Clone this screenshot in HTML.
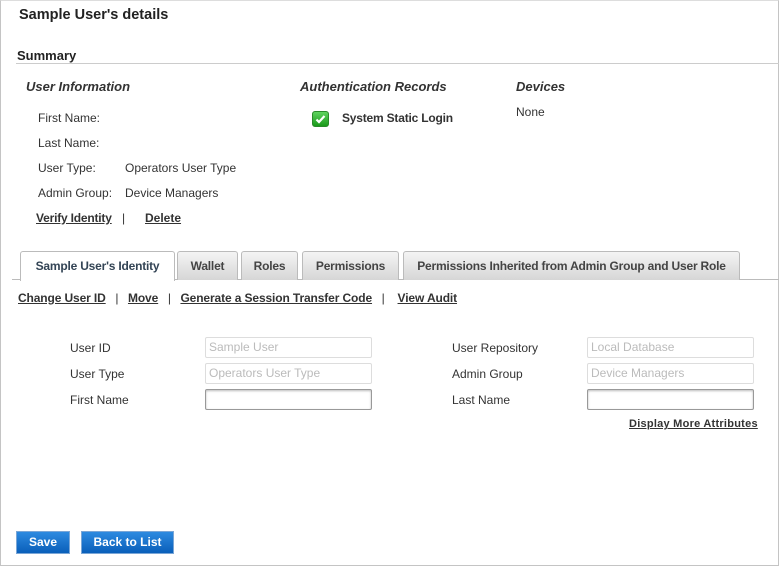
<!DOCTYPE html>
<html><head><style>
*{margin:0;padding:0;box-sizing:border-box}
body{width:779px;height:566px;position:relative;font-family:"Liberation Sans",Arial,sans-serif;font-size:12px;color:#333;background:#fff;overflow:hidden}
.frame{position:absolute;left:0;top:0;width:779px;height:566px;border:1px solid #c4c4c4;border-top-color:#ddd}
.a{position:absolute;white-space:nowrap}
.b{font-weight:bold}
.h{font-weight:bold;font-style:italic;font-size:13px;color:#333}
.lk{font-weight:bold;text-decoration:underline;color:#333}
.tab{position:absolute;top:251px;height:29px;border:1px solid #bbb;border-bottom:none;border-radius:3px 3px 0 0;background:linear-gradient(#f4f4f4,#d6d6d6);font-weight:bold;color:#444;text-align:center;line-height:28px;font-size:12px;letter-spacing:-0.2px}
.inp{position:absolute;width:167px;height:21px;border:1px solid #ddd;border-radius:2px;color:#bbb;padding-left:3px;line-height:19px}
.inp.e{border:1px solid #999;box-shadow:inset 0 1px 2px #bbb}
.btn{position:absolute;top:531px;height:23px;background:linear-gradient(#2d8ae0,#0a5fb9);border:1px solid #7aa6d6;color:#fff;font-weight:bold;text-align:center;line-height:21px;font-size:12px}
</style></head><body>
<div class="frame"></div>
<div class="a b" style="left:19px;top:7px;font-size:14.5px;color:#222">Sample User's details</div>
<div class="a b" style="left:17px;top:48px;font-size:13px;color:#222">Summary</div>
<div class="a" style="left:16px;top:63px;width:763px;height:1px;background:#ccc"></div>
<div class="a h" style="left:26px;top:79px">User Information</div>
<div class="a h" style="left:300px;top:79px">Authentication Records</div>
<div class="a h" style="left:516px;top:79px">Devices</div>
<div class="a" style="left:516px;top:105px">None</div>
<div class="a" style="left:38px;top:111px">First Name:</div>
<div class="a" style="left:38px;top:136px">Last Name:</div>
<div class="a" style="left:38px;top:161px">User Type:</div>
<div class="a" style="left:125px;top:161px">Operators User Type</div>
<div class="a" style="left:38px;top:186px">Admin Group:</div>
<div class="a" style="left:125px;top:186px">Device Managers</div>
<div class="a lk" style="left:36px;top:211px;letter-spacing:-0.2px">Verify Identity</div>
<div class="a" style="left:122px;top:211px">|</div>
<div class="a lk" style="left:145px;top:211px">Delete</div>
<div class="a" style="left:312px;top:111px;width:17px;height:16px;border-radius:3px;background:linear-gradient(#5fd35f,#1a9a1a);border:1px solid #2a8a2a"><svg width="15" height="14" viewBox="0 0 15 14"><path d="M3.5 7.5l2.5 2.5 5.5-6" stroke="#fff" stroke-width="2.2" fill="none"/></svg></div>
<div class="a b" style="left:342px;top:111px;letter-spacing:-0.2px">System Static Login</div>
<div class="a" style="left:12px;top:279px;width:767px;height:1px;background:#bbb"></div>
<div class="tab" style="left:20px;width:155px;height:30px;background:#fff;color:#345">Sample User's Identity</div>
<div class="tab" style="left:177px;width:61px">Wallet</div>
<div class="tab" style="left:241px;width:57px">Roles</div>
<div class="tab" style="left:302px;width:97px">Permissions</div>
<div class="tab" style="left:403px;width:337px">Permissions Inherited from Admin Group and User Role</div>
<div class="a" style="left:18px;top:291px;letter-spacing:-0.12px"><span class="lk">Change User ID</span>&nbsp;&nbsp;&nbsp;|&nbsp;&nbsp;&nbsp;<span class="lk">Move</span>&nbsp;&nbsp;&nbsp;|&nbsp;&nbsp;&nbsp;<span class="lk">Generate a Session Transfer Code</span>&nbsp;&nbsp;&nbsp;|&nbsp;&nbsp;&nbsp;&nbsp;<span class="lk">View Audit</span></div>
<div class="a" style="left:70px;top:341px">User ID</div>
<div class="a" style="left:70px;top:367px">User Type</div>
<div class="a" style="left:70px;top:393px">First Name</div>
<div class="a" style="left:452px;top:341px">User Repository</div>
<div class="a" style="left:452px;top:367px">Admin Group</div>
<div class="a" style="left:452px;top:393px">Last Name</div>
<div class="inp" style="left:205px;top:337px">Sample User</div>
<div class="inp" style="left:205px;top:363px">Operators User Type</div>
<div class="inp e" style="left:205px;top:389px"></div>
<div class="inp" style="left:587px;top:337px">Local Database</div>
<div class="inp" style="left:587px;top:363px">Device Managers</div>
<div class="inp e" style="left:587px;top:389px"></div>
<div class="a lk" style="left:629px;top:418px;font-size:11px;letter-spacing:0.25px">Display More Attributes</div>
<div class="btn" style="left:16px;width:54px">Save</div>
<div class="btn" style="left:81px;width:93px">Back to List</div>
</body></html>
